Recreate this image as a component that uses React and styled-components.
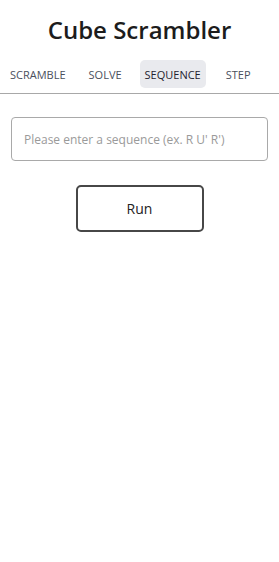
import styled, { createGlobalStyle } from 'styled-components';

const GlobalStyle = createGlobalStyle`
  body {
    margin: 0;
    background: #fff;
    font-family: "Open Sans", "Noto Sans", sans-serif;
    color: #1f1f1f;
  }
`;

const Page = styled.div`
  display: flex;
  flex-direction: column;
  width: 279px;
`;

const Title = styled.h1`
  margin: 14px 0 0;
  font-size: 24px;
  font-weight: 600;
  line-height: 32px;
  text-align: center;
  color: #1c1c1c;
`;

const Tabs = styled.nav`
  display: flex;
  align-items: center;
  gap: 13px;
  padding: 14px 4px 5px 5px;
  border-bottom: 1px solid #a8a8a8;
`;

const Tab = styled.button`
  border: none;
  border-radius: 5px;
  padding: 0 5px;
  height: 28px;
  font-family: inherit;
  font-size: 11px;
  font-weight: 500;
  text-transform: uppercase;
  color: ${(p) => (p.active ? '#1f2330' : '#4a4f5c')};
  background: ${(p) => (p.active ? '#e9eaee' : 'transparent')};
  cursor: pointer;
  &:last-child {
    margin-left: 2px;
  }
`;

const Body = styled.div`
  display: flex;
  flex-direction: column;
  align-items: center;
  padding: 23px 11px 0 11px;
  gap: 24px;
`;

const Input = styled.input`
  box-sizing: border-box;
  width: 100%;
  height: 44px;
  padding: 0 12px;
  border: 1px solid #a9a9a9;
  border-radius: 4px;
  font-family: inherit;
  font-size: 12px;
  &::placeholder {
    color: #9a9a9a;
  }
`;

const RunButton = styled.button`
  box-sizing: border-box;
  width: 128px;
  height: 47px;
  border: 2px solid #474747;
  border-radius: 5px;
  background: #fff;
  font-family: inherit;
  font-size: 14px;
  font-weight: 500;
  color: #222;
  cursor: pointer;
`;

const tabs = ['Scramble', 'Solve', 'Sequence', 'Step'];

export default function App() {
  return (
    <Page>
      <GlobalStyle />
      <Title>Cube Scrambler</Title>
      <Tabs>
        {tabs.map((t) => (
          <Tab key={t} active={t === 'Sequence'}>{t}</Tab>
        ))}
      </Tabs>
      <Body>
        <Input placeholder="Please enter a sequence (ex. R U' R')" />
        <RunButton>Run</RunButton>
      </Body>
    </Page>
  );
}
